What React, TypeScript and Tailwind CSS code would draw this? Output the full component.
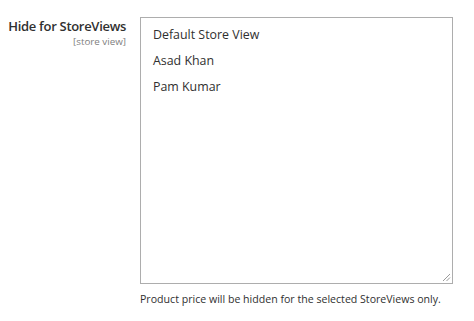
export default function App() {
  const stores = ['Default Store View', 'Asad Khan', 'Pam Kumar']

  return (
    <div className="w-[474px] h-[321px] bg-white font-['Open_Sans',sans-serif] text-[#303030]">
      <div className="flex pt-[17px]">
        {/* label column */}
        <div className="w-[126px] shrink-0 flex flex-col items-end pt-[1px]">
          <span className="text-[13px] font-semibold leading-[16px] tracking-[-0.3px] text-[#303030] whitespace-nowrap">
            Hide for StoreViews
          </span>
          <span className="mt-[3px] text-[9.8px] leading-[10px] text-[#808080] whitespace-nowrap">[store view]</span>
        </div>

        {/* control column */}
        <div className="ml-[14px] shrink-0 flex flex-col">
          <div className="relative w-[313px] h-[267px] border border-[#adadad] bg-white pt-[4px] pl-[12px]">
            {stores.map((s) => (
              <div key={s} className="text-[12.4px] leading-[26px] text-[#303030]">
                {s}
              </div>
            ))}
            {/* resize grip */}
            <svg className="absolute right-[1px] bottom-[1px]" width="9" height="9" viewBox="0 0 9 9">
              <path d="M8 1 L1 8 M8 4.5 L4.5 8" stroke="#9a9a9a" strokeWidth="1" fill="none" />
            </svg>
          </div>
          <p className="mt-[7px] text-[10.6px] leading-[16px] text-[#303030] whitespace-nowrap">
            Product price will be hidden for the selected StoreViews only.
          </p>
        </div>
      </div>
    </div>
  )
}
